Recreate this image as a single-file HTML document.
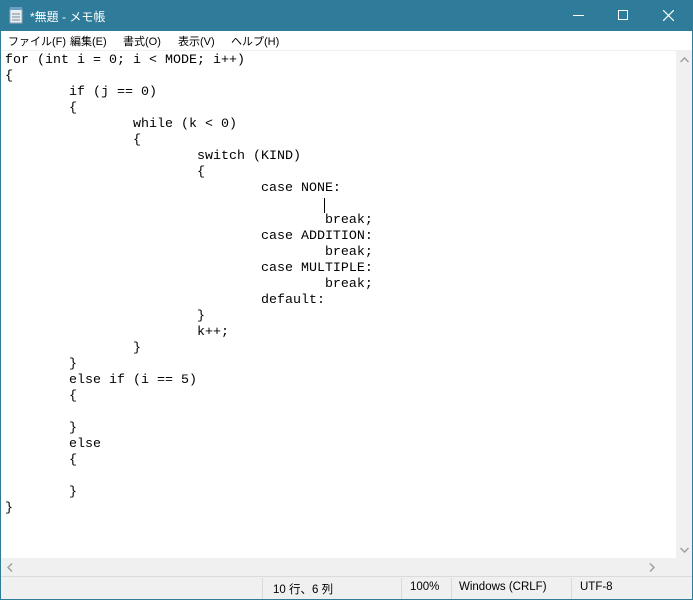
<!DOCTYPE html>
<html><head><meta charset="utf-8"><style>
*{margin:0;padding:0;box-sizing:border-box}
body{width:693px;height:600px;overflow:hidden;background:#fff;font-family:"Liberation Sans","Noto Sans CJK JP",sans-serif;position:relative}
.win{position:absolute;left:0;top:0;width:693px;height:600px;border:1px solid #2e7b9a}
.title{position:absolute;left:0;top:0;width:693px;height:31px;background:#2e7b9a;color:#fff;font-size:12px}
.title .t{position:absolute;left:30px;top:8px}
.menu{position:absolute;left:1px;top:31px;width:691px;height:19px;background:#fff;font-size:11px;color:#000}
.menu span{position:absolute;top:2px;white-space:nowrap}
.edit{position:absolute;left:1px;top:50px;width:675px;height:508px;background:#fff;border-top:1px solid #f0f0f0}
pre{position:absolute;left:4px;top:2px;font-family:"Liberation Mono",monospace;font-size:13.33px;line-height:16px;tab-size:8;color:#000}
.vs{position:absolute;left:676px;top:50px;width:16px;height:508px;background:#f0f0f0}
.hs{position:absolute;left:1px;top:558px;width:691px;height:18px;background:#f0f0f0}
.sb{position:absolute;left:1px;top:576px;width:691px;height:23px;background:#f0f0f0;border-top:1px solid #dadada;font-size:11.5px;color:#000}
.sb span{position:absolute;top:4px}
.sep{position:absolute;top:1px;width:1px;height:21px;background:#dadada}
</style></head><body>
<div class="title">
<svg style="position:absolute;left:9px;top:7px" width="16" height="17"><rect x="1" y="2" width="12" height="14" fill="#e8eef2" stroke="#9ab" /><rect x="1" y="0" width="12" height="3" fill="#6aa0c8"/><g stroke="#789"><line x1="3" y1="7" x2="11" y2="7"/><line x1="3" y1="10" x2="11" y2="10"/><line x1="3" y1="13" x2="11" y2="13"/></g></svg>
<span class="t">*無題 - メモ帳</span>
<div style="position:absolute;left:573px;top:15px;width:11px;height:1px;background:#fff"></div>
<div style="position:absolute;left:618px;top:10px;width:10px;height:10px;border:1px solid #fff"></div>
<svg style="position:absolute;left:663px;top:10px" width="11" height="11"><path d="M0 0L11 11M11 0L0 11" stroke="#fff" stroke-width="1.2"/></svg>
</div>
<div class="menu"><span style="left:7px">ファイル(F)</span><span style="left:69px">編集(E)</span><span style="left:122px">書式(O)</span><span style="left:177px">表示(V)</span><span style="left:230px">ヘルプ(H)</span></div>
<div class="edit"><pre>for (int i = 0; i &lt; MODE; i++)
{
	if (j == 0)
	{
		while (k &lt; 0)
		{
			switch (KIND)
			{
				case NONE:
					
					break;
				case ADDITION:
					break;
				case MULTIPLE:
					break;
				default:
			}
			k++;
		}
	}
	else if (i == 5)
	{

	}
	else
	{

	}
}</pre>
<div style="position:absolute;left:323px;top:147px;width:1px;height:15px;background:#000"></div>
</div>
<div class="vs"><svg style="position:absolute;left:4px;top:7px" width="9" height="6"><path d="M0.5 5L4.5 1L8.5 5" stroke="#a0a0a0" fill="none" stroke-width="1.5"/></svg><svg style="position:absolute;left:4px;top:497px" width="9" height="6"><path d="M0.5 1L4.5 5L8.5 1" stroke="#a0a0a0" fill="none" stroke-width="1.5"/></svg></div>
<div class="hs"><svg style="position:absolute;left:6px;top:5px" width="6" height="9"><path d="M5 0.5L1 4.5L5 8.5" stroke="#a0a0a0" fill="none" stroke-width="1.5"/></svg><svg style="position:absolute;left:648px;top:5px" width="6" height="9"><path d="M1 0.5L5 4.5L1 8.5" stroke="#a0a0a0" fill="none" stroke-width="1.5"/></svg></div>
<div class="sb">
<div class="sep" style="left:261px"></div><div class="sep" style="left:400px"></div><div class="sep" style="left:450px"></div><div class="sep" style="left:570px"></div>
<span style="left:272px">10 行、6 列</span><span style="left:409px">100%</span><span style="left:458px">Windows (CRLF)</span><span style="left:579px">UTF-8</span>
</div>
<div class="win"></div>
</body></html>
